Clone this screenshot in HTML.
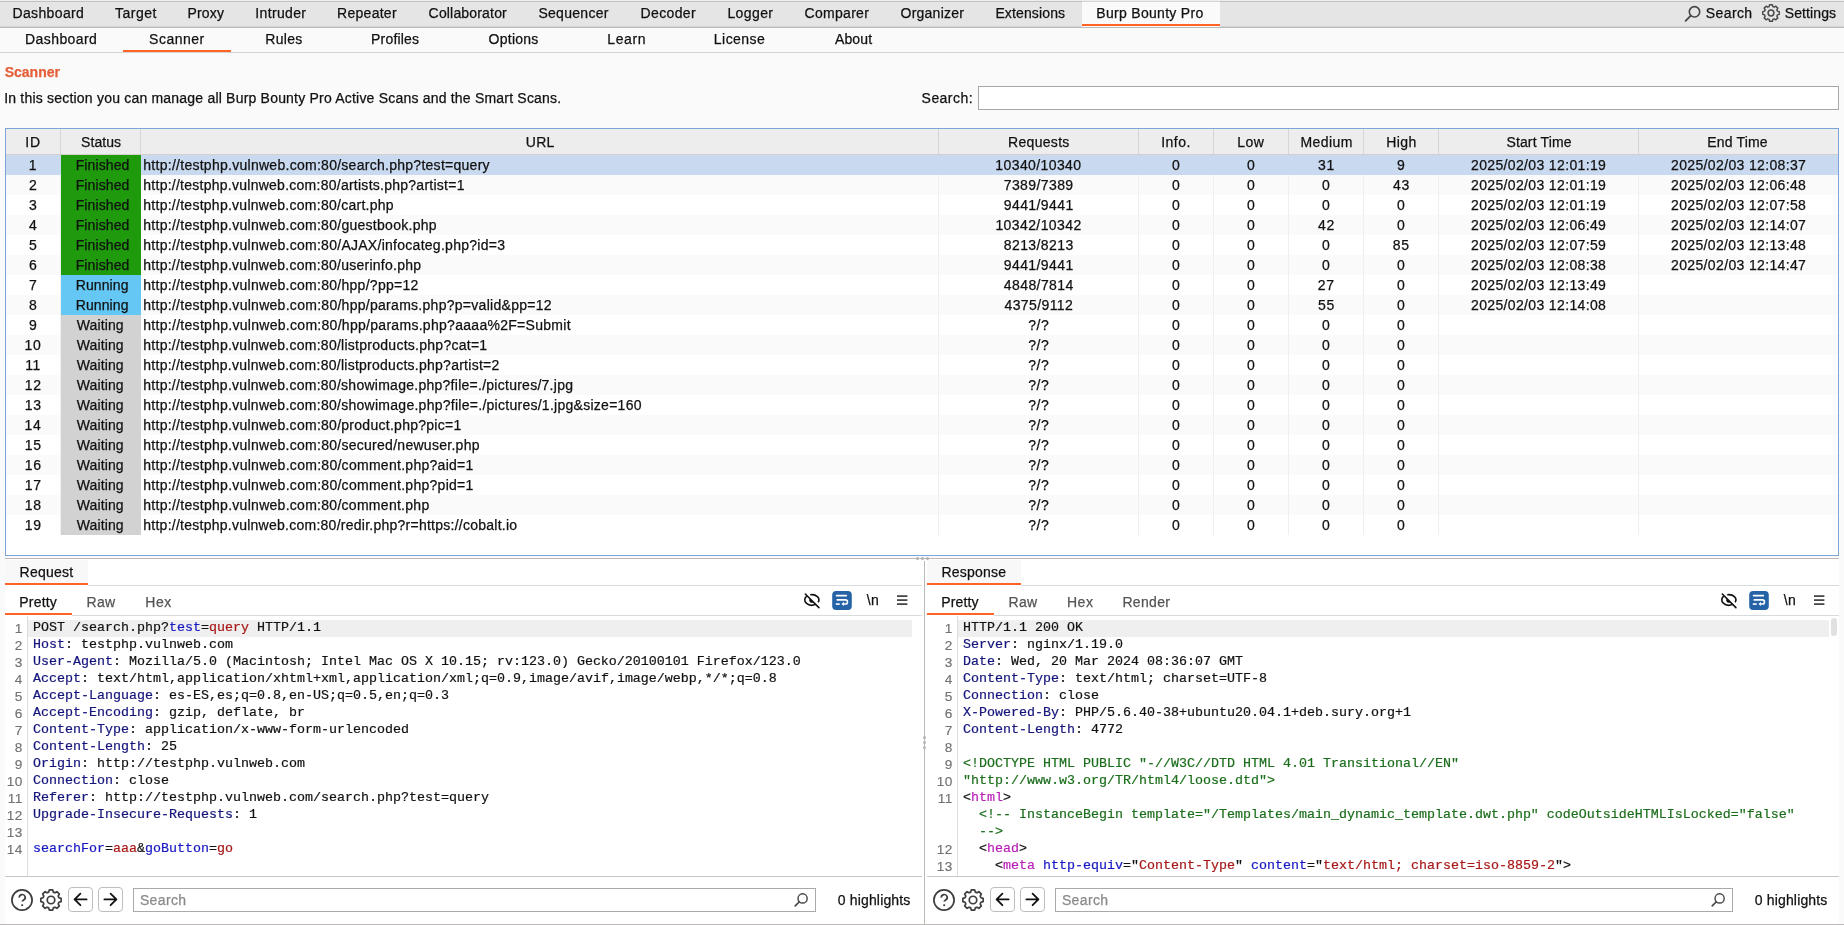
<!DOCTYPE html>
<html><head><meta charset="utf-8"><style>
*{margin:0;padding:0;box-sizing:border-box}
html,body{width:1844px;height:925px;overflow:hidden;background:#fafafa;font-family:"Liberation Sans",sans-serif;font-size:14px;color:#111;position:relative}
.a{position:absolute;white-space:pre}
.t{position:absolute;white-space:pre;line-height:20px;height:20px;-webkit-text-stroke:0.25px currentColor}
.mono{font-family:"Liberation Mono",monospace;font-size:13.333px;-webkit-text-stroke:0.2px currentColor}
</style></head><body><div id="root" style="position:absolute;left:0;top:0;width:1844px;height:925px;background:#fafafa;will-change:transform;overflow:hidden">
<div class="a" style="left:0;top:0;width:1844px;height:1px;background:#ededed"></div>
<div class="a" style="left:0;top:1px;width:1844px;height:27px;background:#e5e5e5;border-top:1px solid #c2c2c2;border-bottom:1px solid #b9b9b9"></div>
<div class="a" style="left:0;top:26px;width:1844px;height:1px;background:#d2d6d6"></div>
<div class="a" style="left:1082px;top:1px;width:138px;height:1px;background:#d6d6d6"></div>
<div class="a" style="left:1082px;top:2px;width:138px;height:25px;background:#fafafa"></div>
<div class="a" style="left:1082px;top:24px;width:138px;height:2px;background:#ff6326"></div>
<div class="t" style="left:12.40px;top:3px;letter-spacing:0.375px;">Dashboard</div>
<div class="t" style="left:115.10px;top:3px;letter-spacing:0.460px;">Target</div>
<div class="t" style="left:187.50px;top:3px;letter-spacing:0.150px;">Proxy</div>
<div class="t" style="left:255.30px;top:3px;letter-spacing:0.343px;">Intruder</div>
<div class="t" style="left:337.10px;top:3px;letter-spacing:0.271px;">Repeater</div>
<div class="t" style="left:428.60px;top:3px;letter-spacing:0.173px;">Collaborator</div>
<div class="t" style="left:538.40px;top:3px;letter-spacing:0.300px;">Sequencer</div>
<div class="t" style="left:640.60px;top:3px;letter-spacing:0.350px;">Decoder</div>
<div class="t" style="left:727.40px;top:3px;letter-spacing:0.400px;">Logger</div>
<div class="t" style="left:804.50px;top:3px;letter-spacing:0.300px;">Comparer</div>
<div class="t" style="left:900.50px;top:3px;letter-spacing:0.250px;">Organizer</div>
<div class="t" style="left:995.40px;top:3px;letter-spacing:0.133px;">Extensions</div>
<div class="t" style="left:1096.30px;top:3px;letter-spacing:0.300px;">Burp Bounty Pro</div>
<svg class="a" style="left:1683px;top:4px" width="20" height="20" viewBox="0 0 20 20"><circle cx="11.5" cy="7.8" r="5.2" fill="none" stroke="#454545" stroke-width="1.6"/><line x1="7.8" y1="11.6" x2="2.6" y2="16.8" stroke="#454545" stroke-width="1.8" stroke-linecap="round"/></svg>
<div class="t" style="left:1705.80px;top:3px;letter-spacing:0.400px;">Search</div>
<svg class="a" style="left:1759.3px;top:1.3px" width="24" height="24" viewBox="0 0 24 24"><path d="M10.63,3.76 L13.37,3.76 L13.86,5.59 L15.22,6.15 L16.85,5.21 L18.79,7.15 L17.85,8.78 L18.41,10.14 L20.24,10.63 L20.24,13.37 L18.41,13.86 L17.85,15.22 L18.79,16.85 L16.85,18.79 L15.22,17.85 L13.86,18.41 L13.37,20.24 L10.63,20.24 L10.14,18.41 L8.78,17.85 L7.15,18.79 L5.21,16.85 L6.15,15.22 L5.59,13.86 L3.76,13.37 L3.76,10.63 L5.59,10.14 L6.15,8.78 L5.21,7.15 L7.15,5.21 L8.78,6.15 L10.14,5.59 Z" fill="none" stroke="#4a4a4a" stroke-width="1.5" stroke-linejoin="round"/><circle cx="12.0" cy="12.0" r="2.91" fill="none" stroke="#4a4a4a" stroke-width="1.5"/></svg>
<div class="t" style="left:1784.70px;top:3px;letter-spacing:0.114px;">Settings</div>
<div class="a" style="left:0;top:52px;width:1844px;height:1px;background:#d3d6d6"></div>
<div class="a" style="left:123px;top:50px;width:108px;height:2px;background:#ff6326"></div>
<div class="t" style="left:25.10px;top:29px;letter-spacing:0.412px;">Dashboard</div>
<div class="t" style="left:149.10px;top:29px;letter-spacing:0.483px;">Scanner</div>
<div class="t" style="left:265.30px;top:29px;letter-spacing:0.300px;">Rules</div>
<div class="t" style="left:371.10px;top:29px;letter-spacing:0.186px;">Profiles</div>
<div class="t" style="left:488.60px;top:29px;letter-spacing:0.250px;">Options</div>
<div class="t" style="left:607.30px;top:29px;letter-spacing:0.600px;">Learn</div>
<div class="t" style="left:713.80px;top:29px;letter-spacing:0.467px;">License</div>
<div class="t" style="left:834.90px;top:29px;letter-spacing:0.150px;">About</div>
<div class="t" style="left:4.80px;top:62px;letter-spacing:-0.033px;font-weight:bold;color:#e5603a">Scanner</div>
<div class="t" style="left:4.20px;top:88px;letter-spacing:0.204px;">In this section you can manage all Burp Bounty Pro Active Scans and the Smart Scans.</div>
<div class="t" style="left:921.60px;top:88px;letter-spacing:0.450px;">Search:</div>
<div class="a" style="left:978px;top:86px;width:861px;height:24px;background:#fff;border:1px solid #aba7a7"></div>
<div class="a" style="left:5px;top:128px;width:1834px;height:428px;background:#fff;border:1px solid #7da5d8"></div>
<div class="a" style="left:6px;top:129px;width:1832px;height:26px;background:#ededed;border-bottom:1px solid #d3d0ce"></div>
<div class="a" style="left:60px;top:129px;width:1px;height:25px;background:#d6d6d6"></div>
<div class="a" style="left:140px;top:129px;width:1px;height:25px;background:#d6d6d6"></div>
<div class="a" style="left:938px;top:129px;width:1px;height:25px;background:#d6d6d6"></div>
<div class="a" style="left:1138px;top:129px;width:1px;height:25px;background:#d6d6d6"></div>
<div class="a" style="left:1213px;top:129px;width:1px;height:25px;background:#d6d6d6"></div>
<div class="a" style="left:1288px;top:129px;width:1px;height:25px;background:#d6d6d6"></div>
<div class="a" style="left:1363px;top:129px;width:1px;height:25px;background:#d6d6d6"></div>
<div class="a" style="left:1438px;top:129px;width:1px;height:25px;background:#d6d6d6"></div>
<div class="a" style="left:1638px;top:129px;width:1px;height:25px;background:#d6d6d6"></div>
<div class="t" style="left:25.30px;top:132px;letter-spacing:0.800px;">ID</div>
<div class="t" style="left:81.00px;top:132px;letter-spacing:0.080px;">Status</div>
<div class="t" style="left:525.70px;top:132px;letter-spacing:0.350px;">URL</div>
<div class="t" style="left:1008.10px;top:132px;letter-spacing:0.300px;">Requests</div>
<div class="t" style="left:1161.20px;top:132px;letter-spacing:0.500px;">Info.</div>
<div class="t" style="left:1237.30px;top:132px;letter-spacing:0.500px;">Low</div>
<div class="t" style="left:1300.40px;top:132px;letter-spacing:0.460px;">Medium</div>
<div class="t" style="left:1386.30px;top:132px;letter-spacing:0.367px;">High</div>
<div class="t" style="left:1506.40px;top:132px;letter-spacing:0.156px;">Start Time</div>
<div class="t" style="left:1707.20px;top:132px;letter-spacing:0.186px;">End Time</div>
<div class="a" style="left:6px;top:155px;width:1832px;height:20px;background:#c9daf0"></div>
<div class="a" style="left:6px;top:175px;width:1832px;height:20px;background:#fafafa"></div>
<div class="a" style="left:6px;top:195px;width:1832px;height:20px;background:#ffffff"></div>
<div class="a" style="left:6px;top:215px;width:1832px;height:20px;background:#fafafa"></div>
<div class="a" style="left:6px;top:235px;width:1832px;height:20px;background:#ffffff"></div>
<div class="a" style="left:6px;top:255px;width:1832px;height:20px;background:#fafafa"></div>
<div class="a" style="left:6px;top:275px;width:1832px;height:20px;background:#ffffff"></div>
<div class="a" style="left:6px;top:295px;width:1832px;height:20px;background:#fafafa"></div>
<div class="a" style="left:6px;top:315px;width:1832px;height:20px;background:#ffffff"></div>
<div class="a" style="left:6px;top:335px;width:1832px;height:20px;background:#fafafa"></div>
<div class="a" style="left:6px;top:355px;width:1832px;height:20px;background:#ffffff"></div>
<div class="a" style="left:6px;top:375px;width:1832px;height:20px;background:#fafafa"></div>
<div class="a" style="left:6px;top:395px;width:1832px;height:20px;background:#ffffff"></div>
<div class="a" style="left:6px;top:415px;width:1832px;height:20px;background:#fafafa"></div>
<div class="a" style="left:6px;top:435px;width:1832px;height:20px;background:#ffffff"></div>
<div class="a" style="left:6px;top:455px;width:1832px;height:20px;background:#fafafa"></div>
<div class="a" style="left:6px;top:475px;width:1832px;height:20px;background:#ffffff"></div>
<div class="a" style="left:6px;top:495px;width:1832px;height:20px;background:#fafafa"></div>
<div class="a" style="left:6px;top:515px;width:1832px;height:20px;background:#ffffff"></div>
<div class="a" style="left:60px;top:175px;width:1px;height:360px;background:#efefef"></div>
<div class="a" style="left:140px;top:175px;width:1px;height:360px;background:#efefef"></div>
<div class="a" style="left:938px;top:175px;width:1px;height:360px;background:#efefef"></div>
<div class="a" style="left:1138px;top:175px;width:1px;height:360px;background:#efefef"></div>
<div class="a" style="left:1213px;top:175px;width:1px;height:360px;background:#efefef"></div>
<div class="a" style="left:1288px;top:175px;width:1px;height:360px;background:#efefef"></div>
<div class="a" style="left:1363px;top:175px;width:1px;height:360px;background:#efefef"></div>
<div class="a" style="left:1438px;top:175px;width:1px;height:360px;background:#efefef"></div>
<div class="a" style="left:1638px;top:175px;width:1px;height:360px;background:#efefef"></div>
<div class="a" style="left:61px;top:155px;width:80px;height:20px;background:#1e9a0c"></div>
<div class="t" style="left:28.75px;top:155px;letter-spacing:0.000px;">1</div>
<div class="t" style="left:75.70px;top:155px;letter-spacing:0.102px;">Finished</div>
<div class="t" style="left:143.30px;top:155px;letter-spacing:0.272px;">http://testphp.vulnweb.com:80/search.php?test=query</div>
<div class="t" style="left:995.34px;top:155px;letter-spacing:0.402px;">10340/10340</div>
<div class="t" style="left:1171.93px;top:155px;letter-spacing:0.000px;">0</div>
<div class="t" style="left:1246.93px;top:155px;letter-spacing:0.000px;">0</div>
<div class="t" style="left:1317.89px;top:155px;letter-spacing:0.725px;">31</div>
<div class="t" style="left:1396.94px;top:155px;letter-spacing:0.000px;">9</div>
<div class="t" style="left:1471.02px;top:155px;letter-spacing:0.353px;">2025/02/03 12:01:19</div>
<div class="t" style="left:1671.07px;top:155px;letter-spacing:0.353px;">2025/02/03 12:08:37</div>
<div class="a" style="left:61px;top:175px;width:80px;height:20px;background:#1e9a0c"></div>
<div class="t" style="left:28.94px;top:175px;letter-spacing:0.000px;">2</div>
<div class="t" style="left:75.70px;top:175px;letter-spacing:0.102px;">Finished</div>
<div class="t" style="left:143.30px;top:175px;letter-spacing:0.257px;">http://testphp.vulnweb.com:80/artists.php?artist=1</div>
<div class="t" style="left:1003.73px;top:175px;letter-spacing:0.406px;">7389/7389</div>
<div class="t" style="left:1171.93px;top:175px;letter-spacing:0.000px;">0</div>
<div class="t" style="left:1246.93px;top:175px;letter-spacing:0.000px;">0</div>
<div class="t" style="left:1321.93px;top:175px;letter-spacing:0.000px;">0</div>
<div class="t" style="left:1392.98px;top:175px;letter-spacing:0.735px;">43</div>
<div class="t" style="left:1471.02px;top:175px;letter-spacing:0.353px;">2025/02/03 12:01:19</div>
<div class="t" style="left:1671.02px;top:175px;letter-spacing:0.353px;">2025/02/03 12:06:48</div>
<div class="a" style="left:61px;top:195px;width:80px;height:20px;background:#1e9a0c"></div>
<div class="t" style="left:28.98px;top:195px;letter-spacing:0.000px;">3</div>
<div class="t" style="left:75.70px;top:195px;letter-spacing:0.102px;">Finished</div>
<div class="t" style="left:143.30px;top:195px;letter-spacing:0.265px;">http://testphp.vulnweb.com:80/cart.php</div>
<div class="t" style="left:1003.77px;top:195px;letter-spacing:0.406px;">9441/9441</div>
<div class="t" style="left:1171.93px;top:195px;letter-spacing:0.000px;">0</div>
<div class="t" style="left:1246.93px;top:195px;letter-spacing:0.000px;">0</div>
<div class="t" style="left:1321.93px;top:195px;letter-spacing:0.000px;">0</div>
<div class="t" style="left:1396.93px;top:195px;letter-spacing:0.000px;">0</div>
<div class="t" style="left:1471.02px;top:195px;letter-spacing:0.353px;">2025/02/03 12:01:19</div>
<div class="t" style="left:1671.02px;top:195px;letter-spacing:0.353px;">2025/02/03 12:07:58</div>
<div class="a" style="left:61px;top:215px;width:80px;height:20px;background:#1e9a0c"></div>
<div class="t" style="left:28.97px;top:215px;letter-spacing:0.000px;">4</div>
<div class="t" style="left:75.70px;top:215px;letter-spacing:0.102px;">Finished</div>
<div class="t" style="left:143.30px;top:215px;letter-spacing:0.274px;">http://testphp.vulnweb.com:80/guestbook.php</div>
<div class="t" style="left:995.45px;top:215px;letter-spacing:0.401px;">10342/10342</div>
<div class="t" style="left:1171.93px;top:215px;letter-spacing:0.000px;">0</div>
<div class="t" style="left:1246.93px;top:215px;letter-spacing:0.000px;">0</div>
<div class="t" style="left:1318.04px;top:215px;letter-spacing:0.730px;">42</div>
<div class="t" style="left:1396.93px;top:215px;letter-spacing:0.000px;">0</div>
<div class="t" style="left:1471.02px;top:215px;letter-spacing:0.353px;">2025/02/03 12:06:49</div>
<div class="t" style="left:1671.07px;top:215px;letter-spacing:0.353px;">2025/02/03 12:14:07</div>
<div class="a" style="left:61px;top:235px;width:80px;height:20px;background:#1e9a0c"></div>
<div class="t" style="left:28.98px;top:235px;letter-spacing:0.000px;">5</div>
<div class="t" style="left:75.70px;top:235px;letter-spacing:0.102px;">Finished</div>
<div class="t" style="left:143.30px;top:235px;letter-spacing:0.273px;">http://testphp.vulnweb.com:80/AJAX/infocateg.php?id=3</div>
<div class="t" style="left:1003.77px;top:235px;letter-spacing:0.406px;">8213/8213</div>
<div class="t" style="left:1171.93px;top:235px;letter-spacing:0.000px;">0</div>
<div class="t" style="left:1246.93px;top:235px;letter-spacing:0.000px;">0</div>
<div class="t" style="left:1321.93px;top:235px;letter-spacing:0.000px;">0</div>
<div class="t" style="left:1392.84px;top:235px;letter-spacing:0.720px;">85</div>
<div class="t" style="left:1471.02px;top:235px;letter-spacing:0.353px;">2025/02/03 12:07:59</div>
<div class="t" style="left:1671.02px;top:235px;letter-spacing:0.353px;">2025/02/03 12:13:48</div>
<div class="a" style="left:61px;top:255px;width:80px;height:20px;background:#1e9a0c"></div>
<div class="t" style="left:28.89px;top:255px;letter-spacing:0.000px;">6</div>
<div class="t" style="left:75.70px;top:255px;letter-spacing:0.102px;">Finished</div>
<div class="t" style="left:143.30px;top:255px;letter-spacing:0.265px;">http://testphp.vulnweb.com:80/userinfo.php</div>
<div class="t" style="left:1003.77px;top:255px;letter-spacing:0.406px;">9441/9441</div>
<div class="t" style="left:1171.93px;top:255px;letter-spacing:0.000px;">0</div>
<div class="t" style="left:1246.93px;top:255px;letter-spacing:0.000px;">0</div>
<div class="t" style="left:1321.93px;top:255px;letter-spacing:0.000px;">0</div>
<div class="t" style="left:1396.93px;top:255px;letter-spacing:0.000px;">0</div>
<div class="t" style="left:1471.02px;top:255px;letter-spacing:0.353px;">2025/02/03 12:08:38</div>
<div class="t" style="left:1671.07px;top:255px;letter-spacing:0.353px;">2025/02/03 12:14:47</div>
<div class="a" style="left:61px;top:275px;width:80px;height:20px;background:#64c7f4"></div>
<div class="t" style="left:28.94px;top:275px;letter-spacing:0.000px;">7</div>
<div class="t" style="left:75.70px;top:275px;letter-spacing:0.117px;">Running</div>
<div class="t" style="left:143.30px;top:275px;letter-spacing:0.276px;">http://testphp.vulnweb.com:80/hpp/?pp=12</div>
<div class="t" style="left:1003.81px;top:275px;letter-spacing:0.409px;">4848/7814</div>
<div class="t" style="left:1171.93px;top:275px;letter-spacing:0.000px;">0</div>
<div class="t" style="left:1246.93px;top:275px;letter-spacing:0.000px;">0</div>
<div class="t" style="left:1317.85px;top:275px;letter-spacing:0.710px;">27</div>
<div class="t" style="left:1396.93px;top:275px;letter-spacing:0.000px;">0</div>
<div class="t" style="left:1471.02px;top:275px;letter-spacing:0.353px;">2025/02/03 12:13:49</div>
<div class="a" style="left:61px;top:295px;width:80px;height:20px;background:#64c7f4"></div>
<div class="t" style="left:28.93px;top:295px;letter-spacing:0.000px;">8</div>
<div class="t" style="left:75.70px;top:295px;letter-spacing:0.117px;">Running</div>
<div class="t" style="left:143.30px;top:295px;letter-spacing:0.281px;">http://testphp.vulnweb.com:80/hpp/params.php?p=valid&amp;pp=12</div>
<div class="t" style="left:1004.50px;top:295px;letter-spacing:0.401px;">4375/9112</div>
<div class="t" style="left:1171.93px;top:295px;letter-spacing:0.000px;">0</div>
<div class="t" style="left:1246.93px;top:295px;letter-spacing:0.000px;">0</div>
<div class="t" style="left:1317.89px;top:295px;letter-spacing:0.725px;">55</div>
<div class="t" style="left:1396.93px;top:295px;letter-spacing:0.000px;">0</div>
<div class="t" style="left:1471.02px;top:295px;letter-spacing:0.353px;">2025/02/03 12:14:08</div>
<div class="a" style="left:61px;top:315px;width:80px;height:20px;background:#d2d2d2"></div>
<div class="t" style="left:28.93px;top:315px;letter-spacing:0.000px;">9</div>
<div class="t" style="left:76.80px;top:315px;letter-spacing:0.106px;">Waiting</div>
<div class="t" style="left:143.30px;top:315px;letter-spacing:0.289px;">http://testphp.vulnweb.com:80/hpp/params.php?aaaa%2F=Submit</div>
<div class="t" style="left:1028.29px;top:315px;letter-spacing:0.463px;">?/?</div>
<div class="t" style="left:1171.93px;top:315px;letter-spacing:0.000px;">0</div>
<div class="t" style="left:1246.93px;top:315px;letter-spacing:0.000px;">0</div>
<div class="t" style="left:1321.93px;top:315px;letter-spacing:0.000px;">0</div>
<div class="t" style="left:1396.93px;top:315px;letter-spacing:0.000px;">0</div>
<div class="a" style="left:61px;top:335px;width:80px;height:20px;background:#d2d2d2"></div>
<div class="t" style="left:24.60px;top:335px;letter-spacing:0.705px;">10</div>
<div class="t" style="left:76.80px;top:335px;letter-spacing:0.106px;">Waiting</div>
<div class="t" style="left:143.30px;top:335px;letter-spacing:0.264px;">http://testphp.vulnweb.com:80/listproducts.php?cat=1</div>
<div class="t" style="left:1028.29px;top:335px;letter-spacing:0.463px;">?/?</div>
<div class="t" style="left:1171.93px;top:335px;letter-spacing:0.000px;">0</div>
<div class="t" style="left:1246.93px;top:335px;letter-spacing:0.000px;">0</div>
<div class="t" style="left:1321.93px;top:335px;letter-spacing:0.000px;">0</div>
<div class="t" style="left:1396.93px;top:335px;letter-spacing:0.000px;">0</div>
<div class="a" style="left:61px;top:355px;width:80px;height:20px;background:#d2d2d2"></div>
<div class="t" style="left:25.23px;top:355px;letter-spacing:0.645px;">11</div>
<div class="t" style="left:76.80px;top:355px;letter-spacing:0.106px;">Waiting</div>
<div class="t" style="left:143.30px;top:355px;letter-spacing:0.258px;">http://testphp.vulnweb.com:80/listproducts.php?artist=2</div>
<div class="t" style="left:1028.29px;top:355px;letter-spacing:0.463px;">?/?</div>
<div class="t" style="left:1171.93px;top:355px;letter-spacing:0.000px;">0</div>
<div class="t" style="left:1246.93px;top:355px;letter-spacing:0.000px;">0</div>
<div class="t" style="left:1321.93px;top:355px;letter-spacing:0.000px;">0</div>
<div class="t" style="left:1396.93px;top:355px;letter-spacing:0.000px;">0</div>
<div class="a" style="left:61px;top:375px;width:80px;height:20px;background:#d2d2d2"></div>
<div class="t" style="left:24.70px;top:375px;letter-spacing:0.695px;">12</div>
<div class="t" style="left:76.80px;top:375px;letter-spacing:0.106px;">Waiting</div>
<div class="t" style="left:143.30px;top:375px;letter-spacing:0.263px;">http://testphp.vulnweb.com:80/showimage.php?file=./pictures/7.jpg</div>
<div class="t" style="left:1028.29px;top:375px;letter-spacing:0.463px;">?/?</div>
<div class="t" style="left:1171.93px;top:375px;letter-spacing:0.000px;">0</div>
<div class="t" style="left:1246.93px;top:375px;letter-spacing:0.000px;">0</div>
<div class="t" style="left:1321.93px;top:375px;letter-spacing:0.000px;">0</div>
<div class="t" style="left:1396.93px;top:375px;letter-spacing:0.000px;">0</div>
<div class="a" style="left:61px;top:395px;width:80px;height:20px;background:#d2d2d2"></div>
<div class="t" style="left:24.65px;top:395px;letter-spacing:0.700px;">13</div>
<div class="t" style="left:76.80px;top:395px;letter-spacing:0.106px;">Waiting</div>
<div class="t" style="left:143.30px;top:395px;letter-spacing:0.268px;">http://testphp.vulnweb.com:80/showimage.php?file=./pictures/1.jpg&amp;size=160</div>
<div class="t" style="left:1028.29px;top:395px;letter-spacing:0.463px;">?/?</div>
<div class="t" style="left:1171.93px;top:395px;letter-spacing:0.000px;">0</div>
<div class="t" style="left:1246.93px;top:395px;letter-spacing:0.000px;">0</div>
<div class="t" style="left:1321.93px;top:395px;letter-spacing:0.000px;">0</div>
<div class="t" style="left:1396.93px;top:395px;letter-spacing:0.000px;">0</div>
<div class="a" style="left:61px;top:415px;width:80px;height:20px;background:#d2d2d2"></div>
<div class="t" style="left:24.55px;top:415px;letter-spacing:0.710px;">14</div>
<div class="t" style="left:76.80px;top:415px;letter-spacing:0.106px;">Waiting</div>
<div class="t" style="left:143.30px;top:415px;letter-spacing:0.271px;">http://testphp.vulnweb.com:80/product.php?pic=1</div>
<div class="t" style="left:1028.29px;top:415px;letter-spacing:0.463px;">?/?</div>
<div class="t" style="left:1171.93px;top:415px;letter-spacing:0.000px;">0</div>
<div class="t" style="left:1246.93px;top:415px;letter-spacing:0.000px;">0</div>
<div class="t" style="left:1321.93px;top:415px;letter-spacing:0.000px;">0</div>
<div class="t" style="left:1396.93px;top:415px;letter-spacing:0.000px;">0</div>
<div class="a" style="left:61px;top:435px;width:80px;height:20px;background:#d2d2d2"></div>
<div class="t" style="left:24.65px;top:435px;letter-spacing:0.700px;">15</div>
<div class="t" style="left:76.80px;top:435px;letter-spacing:0.106px;">Waiting</div>
<div class="t" style="left:143.30px;top:435px;letter-spacing:0.275px;">http://testphp.vulnweb.com:80/secured/newuser.php</div>
<div class="t" style="left:1028.29px;top:435px;letter-spacing:0.463px;">?/?</div>
<div class="t" style="left:1171.93px;top:435px;letter-spacing:0.000px;">0</div>
<div class="t" style="left:1246.93px;top:435px;letter-spacing:0.000px;">0</div>
<div class="t" style="left:1321.93px;top:435px;letter-spacing:0.000px;">0</div>
<div class="t" style="left:1396.93px;top:435px;letter-spacing:0.000px;">0</div>
<div class="a" style="left:61px;top:455px;width:80px;height:20px;background:#d2d2d2"></div>
<div class="t" style="left:24.65px;top:455px;letter-spacing:0.700px;">16</div>
<div class="t" style="left:76.80px;top:455px;letter-spacing:0.106px;">Waiting</div>
<div class="t" style="left:143.30px;top:455px;letter-spacing:0.281px;">http://testphp.vulnweb.com:80/comment.php?aid=1</div>
<div class="t" style="left:1028.29px;top:455px;letter-spacing:0.463px;">?/?</div>
<div class="t" style="left:1171.93px;top:455px;letter-spacing:0.000px;">0</div>
<div class="t" style="left:1246.93px;top:455px;letter-spacing:0.000px;">0</div>
<div class="t" style="left:1321.93px;top:455px;letter-spacing:0.000px;">0</div>
<div class="t" style="left:1396.93px;top:455px;letter-spacing:0.000px;">0</div>
<div class="a" style="left:61px;top:475px;width:80px;height:20px;background:#d2d2d2"></div>
<div class="t" style="left:24.70px;top:475px;letter-spacing:0.695px;">17</div>
<div class="t" style="left:76.80px;top:475px;letter-spacing:0.106px;">Waiting</div>
<div class="t" style="left:143.30px;top:475px;letter-spacing:0.281px;">http://testphp.vulnweb.com:80/comment.php?pid=1</div>
<div class="t" style="left:1028.29px;top:475px;letter-spacing:0.463px;">?/?</div>
<div class="t" style="left:1171.93px;top:475px;letter-spacing:0.000px;">0</div>
<div class="t" style="left:1246.93px;top:475px;letter-spacing:0.000px;">0</div>
<div class="t" style="left:1321.93px;top:475px;letter-spacing:0.000px;">0</div>
<div class="t" style="left:1396.93px;top:475px;letter-spacing:0.000px;">0</div>
<div class="a" style="left:61px;top:495px;width:80px;height:20px;background:#d2d2d2"></div>
<div class="t" style="left:24.65px;top:495px;letter-spacing:0.700px;">18</div>
<div class="t" style="left:76.80px;top:495px;letter-spacing:0.106px;">Waiting</div>
<div class="t" style="left:143.30px;top:495px;letter-spacing:0.280px;">http://testphp.vulnweb.com:80/comment.php</div>
<div class="t" style="left:1028.29px;top:495px;letter-spacing:0.463px;">?/?</div>
<div class="t" style="left:1171.93px;top:495px;letter-spacing:0.000px;">0</div>
<div class="t" style="left:1246.93px;top:495px;letter-spacing:0.000px;">0</div>
<div class="t" style="left:1321.93px;top:495px;letter-spacing:0.000px;">0</div>
<div class="t" style="left:1396.93px;top:495px;letter-spacing:0.000px;">0</div>
<div class="a" style="left:61px;top:515px;width:80px;height:20px;background:#d2d2d2"></div>
<div class="t" style="left:24.65px;top:515px;letter-spacing:0.700px;">19</div>
<div class="t" style="left:76.80px;top:515px;letter-spacing:0.106px;">Waiting</div>
<div class="t" style="left:143.30px;top:515px;letter-spacing:0.253px;">http://testphp.vulnweb.com:80/redir.php?r=https://cobalt.io</div>
<div class="t" style="left:1028.29px;top:515px;letter-spacing:0.463px;">?/?</div>
<div class="t" style="left:1171.93px;top:515px;letter-spacing:0.000px;">0</div>
<div class="t" style="left:1246.93px;top:515px;letter-spacing:0.000px;">0</div>
<div class="t" style="left:1321.93px;top:515px;letter-spacing:0.000px;">0</div>
<div class="t" style="left:1396.93px;top:515px;letter-spacing:0.000px;">0</div>
<div class="a" style="left:5px;top:558px;width:1834px;height:1px;background:#bdb9b9"></div>
<div class="a" style="left:5px;top:559px;width:1834px;height:365px;background:#fff"></div>
<div class="a" style="left:924px;top:561px;width:1px;height:363px;background:#bdb9b9"></div>
<div class="a" style="left:0;top:924px;width:1844px;height:1px;background:#bcb8b8"></div>
<div class="a" style="left:5px;top:560px;width:83px;height:23px;background:#f8f8f8"></div>
<div class="a" style="left:5px;top:583px;width:83px;height:2px;background:#ff6326"></div>
<div class="a" style="left:88px;top:585px;width:834px;height:1px;background:#d6dbdb"></div>
<div class="t" style="left:19.50px;top:562px;letter-spacing:0.267px;">Request</div>
<div class="t" style="left:19.30px;top:592px;letter-spacing:0.200px;color:#111;">Pretty</div>
<div class="t" style="left:86.50px;top:592px;letter-spacing:0.350px;color:#555;">Raw</div>
<div class="t" style="left:145.30px;top:592px;letter-spacing:0.500px;color:#555;">Hex</div>
<div class="a" style="left:5px;top:613px;width:67px;height:2px;background:#ff6326"></div>
<div class="a" style="left:72px;top:615px;width:850px;height:1px;background:#d6dbdb"></div>
<svg class="a" style="left:799px;top:588px" width="26" height="24" viewBox="0 0 26 24"><path d="M11.21,6.78 A7.05,5.25 0 0 1 19.08,14.28" fill="none" stroke="#111" stroke-width="1.6" stroke-linecap="butt"/><path d="M16.64,16.3 A7.05,5.25 0 0 1 7.81,8.19" fill="none" stroke="#111" stroke-width="1.6" stroke-linecap="butt"/><path d="M10.9,10.6 A2.4,2.4 0 0 0 14.3,14.0 Z" fill="#111"/><line x1="6.3" y1="6.0" x2="19.9" y2="19.6" stroke="#111" stroke-width="1.6" stroke-linecap="round"/></svg>
<svg class="a" style="left:832px;top:591px" width="20" height="19" viewBox="0 0 20 19"><rect x="0.2" y="0" width="19.6" height="19" rx="4" fill="#2663a6"/><line x1="4.6" y1="4.55" x2="14.3" y2="4.55" stroke="#fff" stroke-width="1.7" stroke-linecap="round"/><path d="M4.6,8.85 L13.4,8.85 A2.05,2.05 0 0 1 13.4,12.95 L11.0,12.95" fill="none" stroke="#fff" stroke-width="1.6" stroke-linecap="butt"/><path d="M9.5,12.95 L11.9,10.8 L11.9,15.1 Z" fill="#fff"/><rect x="3.8" y="12.2" width="3.9" height="1.75" fill="#fff" fill-opacity="0.92"/></svg>
<div class="t" style="left:866.70px;top:590px;letter-spacing:0.500px;">\n</div>
<svg class="a" style="left:897px;top:594.7px" width="11" height="11" viewBox="0 0 11 11"><rect x="0" y="0.3" width="10.4" height="1.6" fill="#333"/><rect x="0" y="4.3" width="10.4" height="1.6" fill="#333"/><rect x="0" y="8.3" width="10.4" height="1.6" fill="#333"/></svg>
<div class="a" style="left:27px;top:616px;width:1px;height:260px;background:#dedede"></div>
<div class="a" style="left:28px;top:620px;width:884px;height:17px;background:#efefef"></div>
<div class="a" style="left:-7.5px;top:620.3px;width:30px;text-align:right;line-height:17px;font-size:13.6px;letter-spacing:0.3px;color:#727272;-webkit-text-stroke:0.15px currentColor">1</div>
<div class="a mono" style="left:33px;top:619px;line-height:17px">POST /search.php?<span style="color:#1818c2">test</span>=<span style="color:#a81818">query</span> HTTP/1.1</div>
<div class="a" style="left:-7.5px;top:637.3px;width:30px;text-align:right;line-height:17px;font-size:13.6px;letter-spacing:0.3px;color:#727272;-webkit-text-stroke:0.15px currentColor">2</div>
<div class="a mono" style="left:33px;top:636px;line-height:17px"><span style="color:#14147c">Host</span>: testphp.vulnweb.com</div>
<div class="a" style="left:-7.5px;top:654.3px;width:30px;text-align:right;line-height:17px;font-size:13.6px;letter-spacing:0.3px;color:#727272;-webkit-text-stroke:0.15px currentColor">3</div>
<div class="a mono" style="left:33px;top:653px;line-height:17px"><span style="color:#14147c">User-Agent</span>: Mozilla/5.0 (Macintosh; Intel Mac OS X 10.15; rv:123.0) Gecko/20100101 Firefox/123.0</div>
<div class="a" style="left:-7.5px;top:671.3px;width:30px;text-align:right;line-height:17px;font-size:13.6px;letter-spacing:0.3px;color:#727272;-webkit-text-stroke:0.15px currentColor">4</div>
<div class="a mono" style="left:33px;top:670px;line-height:17px"><span style="color:#14147c">Accept</span>: text/html,application/xhtml+xml,application/xml;q=0.9,image/avif,image/webp,*/*;q=0.8</div>
<div class="a" style="left:-7.5px;top:688.3px;width:30px;text-align:right;line-height:17px;font-size:13.6px;letter-spacing:0.3px;color:#727272;-webkit-text-stroke:0.15px currentColor">5</div>
<div class="a mono" style="left:33px;top:687px;line-height:17px"><span style="color:#14147c">Accept-Language</span>: es-ES,es;q=0.8,en-US;q=0.5,en;q=0.3</div>
<div class="a" style="left:-7.5px;top:705.3px;width:30px;text-align:right;line-height:17px;font-size:13.6px;letter-spacing:0.3px;color:#727272;-webkit-text-stroke:0.15px currentColor">6</div>
<div class="a mono" style="left:33px;top:704px;line-height:17px"><span style="color:#14147c">Accept-Encoding</span>: gzip, deflate, br</div>
<div class="a" style="left:-7.5px;top:722.3px;width:30px;text-align:right;line-height:17px;font-size:13.6px;letter-spacing:0.3px;color:#727272;-webkit-text-stroke:0.15px currentColor">7</div>
<div class="a mono" style="left:33px;top:721px;line-height:17px"><span style="color:#14147c">Content-Type</span>: application/x-www-form-urlencoded</div>
<div class="a" style="left:-7.5px;top:739.3px;width:30px;text-align:right;line-height:17px;font-size:13.6px;letter-spacing:0.3px;color:#727272;-webkit-text-stroke:0.15px currentColor">8</div>
<div class="a mono" style="left:33px;top:738px;line-height:17px"><span style="color:#14147c">Content-Length</span>: 25</div>
<div class="a" style="left:-7.5px;top:756.3px;width:30px;text-align:right;line-height:17px;font-size:13.6px;letter-spacing:0.3px;color:#727272;-webkit-text-stroke:0.15px currentColor">9</div>
<div class="a mono" style="left:33px;top:755px;line-height:17px"><span style="color:#14147c">Origin</span>: http://testphp.vulnweb.com</div>
<div class="a" style="left:-7.5px;top:773.3px;width:30px;text-align:right;line-height:17px;font-size:13.6px;letter-spacing:0.3px;color:#727272;-webkit-text-stroke:0.15px currentColor">10</div>
<div class="a mono" style="left:33px;top:772px;line-height:17px"><span style="color:#14147c">Connection</span>: close</div>
<div class="a" style="left:-7.5px;top:790.3px;width:30px;text-align:right;line-height:17px;font-size:13.6px;letter-spacing:0.3px;color:#727272;-webkit-text-stroke:0.15px currentColor">11</div>
<div class="a mono" style="left:33px;top:789px;line-height:17px"><span style="color:#14147c">Referer</span>: http://testphp.vulnweb.com/search.php?test=query</div>
<div class="a" style="left:-7.5px;top:807.3px;width:30px;text-align:right;line-height:17px;font-size:13.6px;letter-spacing:0.3px;color:#727272;-webkit-text-stroke:0.15px currentColor">12</div>
<div class="a mono" style="left:33px;top:806px;line-height:17px"><span style="color:#14147c">Upgrade-Insecure-Requests</span>: 1</div>
<div class="a" style="left:-7.5px;top:824.3px;width:30px;text-align:right;line-height:17px;font-size:13.6px;letter-spacing:0.3px;color:#727272;-webkit-text-stroke:0.15px currentColor">13</div>
<div class="a mono" style="left:33px;top:823px;line-height:17px"></div>
<div class="a" style="left:-7.5px;top:841.3px;width:30px;text-align:right;line-height:17px;font-size:13.6px;letter-spacing:0.3px;color:#727272;-webkit-text-stroke:0.15px currentColor">14</div>
<div class="a mono" style="left:33px;top:840px;line-height:17px"><span style="color:#1818c2">searchFor</span>=<span style="color:#a81818">aaa</span>&amp;<span style="color:#1818c2">goButton</span>=<span style="color:#a81818">go</span></div>
<div class="a" style="left:5px;top:876px;width:917px;height:1px;background:#c9c5c5"></div>
<svg class="a" style="left:9.8px;top:887.8px" width="24" height="24" viewBox="0 0 24 24"><circle cx="12" cy="12" r="10.1" fill="none" stroke="#3d3d3d" stroke-width="1.7"/><path d="M9.3,9.6 A2.95,2.95 0 1 1 13.6,12.1 C12.8,12.6 12.2,12.9 12.2,13.6" fill="none" stroke="#3d3d3d" stroke-width="1.7" stroke-linecap="butt"/><rect x="11.3" y="16.3" width="1.8" height="1.8" fill="#3d3d3d"/></svg>
<svg class="a" style="left:37.2px;top:885.9px" width="28" height="28" viewBox="0 0 28 28"><path d="M12.32,3.89 L15.68,3.89 L16.29,6.13 L17.95,6.81 L19.96,5.66 L22.34,8.04 L21.19,10.05 L21.87,11.71 L24.11,12.32 L24.11,15.68 L21.87,16.29 L21.19,17.95 L22.34,19.96 L19.96,22.34 L17.95,21.19 L16.29,21.87 L15.68,24.11 L12.32,24.11 L11.71,21.87 L10.05,21.19 L8.04,22.34 L5.66,19.96 L6.81,17.95 L6.13,16.29 L3.89,15.68 L3.89,12.32 L6.13,11.71 L6.81,10.05 L5.66,8.04 L8.04,5.66 L10.05,6.81 L11.71,6.13 Z" fill="none" stroke="#3d3d3d" stroke-width="1.7" stroke-linejoin="round"/><circle cx="14.0" cy="14.0" r="3.77" fill="none" stroke="#3d3d3d" stroke-width="1.7"/></svg>
<div class="a" style="left:68px;top:887px;width:25px;height:25px;border:1px solid #c2bcbc;border-radius:4px;background:#fff"></div><svg class="a" style="left:68px;top:887px" width="25" height="25" viewBox="0 0 25 25"><path d="M6.6,12.4 L18.6,12.4 M12.4,6.6 L6.6,12.4 L12.4,18.2" fill="none" stroke="#111" stroke-width="1.8" stroke-linecap="round" stroke-linejoin="round"/></svg>
<div class="a" style="left:98px;top:887px;width:25px;height:25px;border:1px solid #c2bcbc;border-radius:4px;background:#fff"></div><svg class="a" style="left:98px;top:887px" width="25" height="25" viewBox="0 0 25 25"><path d="M6.4,12.4 L18.4,12.4 M12.6,6.6 L18.4,12.4 L12.6,18.2" fill="none" stroke="#111" stroke-width="1.8" stroke-linecap="round" stroke-linejoin="round"/></svg>
<div class="a" style="left:133px;top:888px;width:683px;height:24px;border:1px solid #aca8a8;background:#fff"></div>
<div class="t" style="left:139.90px;top:890px;letter-spacing:0.360px;color:#8a8a8a;">Search</div>
<svg class="a" style="left:793px;top:892px" width="16" height="16" viewBox="0 0 16 16"><circle cx="9.6" cy="6.4" r="4.6" fill="none" stroke="#444" stroke-width="1.4"/><line x1="6.4" y1="9.7" x2="2.2" y2="13.9" stroke="#444" stroke-width="1.6" stroke-linecap="round"/></svg>
<div class="t" style="left:837.80px;top:890px;letter-spacing:0.155px;">0 highlights</div>
<div class="a" style="left:927px;top:560px;width:94px;height:23px;background:#f8f8f8"></div>
<div class="a" style="left:927px;top:583px;width:94px;height:2px;background:#ff6326"></div>
<div class="a" style="left:1021px;top:585px;width:818px;height:1px;background:#d6dbdb"></div>
<div class="t" style="left:941.50px;top:562px;letter-spacing:0.200px;">Response</div>
<div class="t" style="left:941.30px;top:592px;letter-spacing:0.120px;color:#111;">Pretty</div>
<div class="t" style="left:1008.50px;top:592px;letter-spacing:0.300px;color:#555;">Raw</div>
<div class="t" style="left:1066.90px;top:592px;letter-spacing:0.550px;color:#555;">Hex</div>
<div class="t" style="left:1122.40px;top:592px;letter-spacing:0.320px;color:#555;">Render</div>
<div class="a" style="left:927px;top:613px;width:67px;height:2px;background:#ff6326"></div>
<div class="a" style="left:994px;top:615px;width:845px;height:1px;background:#d6dbdb"></div>
<svg class="a" style="left:1716px;top:588px" width="26" height="24" viewBox="0 0 26 24"><path d="M11.21,6.78 A7.05,5.25 0 0 1 19.08,14.28" fill="none" stroke="#111" stroke-width="1.6" stroke-linecap="butt"/><path d="M16.64,16.3 A7.05,5.25 0 0 1 7.81,8.19" fill="none" stroke="#111" stroke-width="1.6" stroke-linecap="butt"/><path d="M10.9,10.6 A2.4,2.4 0 0 0 14.3,14.0 Z" fill="#111"/><line x1="6.3" y1="6.0" x2="19.9" y2="19.6" stroke="#111" stroke-width="1.6" stroke-linecap="round"/></svg>
<svg class="a" style="left:1749px;top:591px" width="20" height="19" viewBox="0 0 20 19"><rect x="0.2" y="0" width="19.6" height="19" rx="4" fill="#2663a6"/><line x1="4.6" y1="4.55" x2="14.3" y2="4.55" stroke="#fff" stroke-width="1.7" stroke-linecap="round"/><path d="M4.6,8.85 L13.4,8.85 A2.05,2.05 0 0 1 13.4,12.95 L11.0,12.95" fill="none" stroke="#fff" stroke-width="1.6" stroke-linecap="butt"/><path d="M9.5,12.95 L11.9,10.8 L11.9,15.1 Z" fill="#fff"/><rect x="3.8" y="12.2" width="3.9" height="1.75" fill="#fff" fill-opacity="0.92"/></svg>
<div class="t" style="left:1783.70px;top:590px;letter-spacing:0.500px;">\n</div>
<svg class="a" style="left:1814px;top:594.7px" width="11" height="11" viewBox="0 0 11 11"><rect x="0" y="0.3" width="10.4" height="1.6" fill="#333"/><rect x="0" y="4.3" width="10.4" height="1.6" fill="#333"/><rect x="0" y="8.3" width="10.4" height="1.6" fill="#333"/></svg>
<div class="a" style="left:957px;top:616px;width:1px;height:260px;background:#dedede"></div>
<div class="a" style="left:958px;top:620px;width:871px;height:17px;background:#efefef"></div>
<div class="a" style="left:1831px;top:618px;width:6px;height:18px;border-radius:3px;background:#e1e1e1"></div>
<div class="a" style="left:922.5px;top:620.3px;width:30px;text-align:right;line-height:17px;font-size:13.6px;letter-spacing:0.3px;color:#727272;-webkit-text-stroke:0.15px currentColor">1</div>
<div class="a mono" style="left:963px;top:619px;line-height:17px">HTTP/1.1 200 OK</div>
<div class="a" style="left:922.5px;top:637.3px;width:30px;text-align:right;line-height:17px;font-size:13.6px;letter-spacing:0.3px;color:#727272;-webkit-text-stroke:0.15px currentColor">2</div>
<div class="a mono" style="left:963px;top:636px;line-height:17px"><span style="color:#14147c">Server</span>: nginx/1.19.0</div>
<div class="a" style="left:922.5px;top:654.3px;width:30px;text-align:right;line-height:17px;font-size:13.6px;letter-spacing:0.3px;color:#727272;-webkit-text-stroke:0.15px currentColor">3</div>
<div class="a mono" style="left:963px;top:653px;line-height:17px"><span style="color:#14147c">Date</span>: Wed, 20 Mar 2024 08:36:07 GMT</div>
<div class="a" style="left:922.5px;top:671.3px;width:30px;text-align:right;line-height:17px;font-size:13.6px;letter-spacing:0.3px;color:#727272;-webkit-text-stroke:0.15px currentColor">4</div>
<div class="a mono" style="left:963px;top:670px;line-height:17px"><span style="color:#14147c">Content-Type</span>: text/html; charset=UTF-8</div>
<div class="a" style="left:922.5px;top:688.3px;width:30px;text-align:right;line-height:17px;font-size:13.6px;letter-spacing:0.3px;color:#727272;-webkit-text-stroke:0.15px currentColor">5</div>
<div class="a mono" style="left:963px;top:687px;line-height:17px"><span style="color:#14147c">Connection</span>: close</div>
<div class="a" style="left:922.5px;top:705.3px;width:30px;text-align:right;line-height:17px;font-size:13.6px;letter-spacing:0.3px;color:#727272;-webkit-text-stroke:0.15px currentColor">6</div>
<div class="a mono" style="left:963px;top:704px;line-height:17px"><span style="color:#14147c">X-Powered-By</span>: PHP/5.6.40-38+ubuntu20.04.1+deb.sury.org+1</div>
<div class="a" style="left:922.5px;top:722.3px;width:30px;text-align:right;line-height:17px;font-size:13.6px;letter-spacing:0.3px;color:#727272;-webkit-text-stroke:0.15px currentColor">7</div>
<div class="a mono" style="left:963px;top:721px;line-height:17px"><span style="color:#14147c">Content-Length</span>: 4772</div>
<div class="a" style="left:922.5px;top:739.3px;width:30px;text-align:right;line-height:17px;font-size:13.6px;letter-spacing:0.3px;color:#727272;-webkit-text-stroke:0.15px currentColor">8</div>
<div class="a mono" style="left:963px;top:738px;line-height:17px"></div>
<div class="a" style="left:922.5px;top:756.3px;width:30px;text-align:right;line-height:17px;font-size:13.6px;letter-spacing:0.3px;color:#727272;-webkit-text-stroke:0.15px currentColor">9</div>
<div class="a mono" style="left:963px;top:755px;line-height:17px"><span style="color:#1b6e1b">&lt;!DOCTYPE HTML PUBLIC "-//W3C//DTD HTML 4.01 Transitional//EN"</span></div>
<div class="a" style="left:922.5px;top:773.3px;width:30px;text-align:right;line-height:17px;font-size:13.6px;letter-spacing:0.3px;color:#727272;-webkit-text-stroke:0.15px currentColor">10</div>
<div class="a mono" style="left:963px;top:772px;line-height:17px"><span style="color:#1b6e1b">"http://www.w3.org/TR/html4/loose.dtd"&gt;</span></div>
<div class="a" style="left:922.5px;top:790.3px;width:30px;text-align:right;line-height:17px;font-size:13.6px;letter-spacing:0.3px;color:#727272;-webkit-text-stroke:0.15px currentColor">11</div>
<div class="a mono" style="left:963px;top:789px;line-height:17px">&lt;<span style="color:#b820b8">html</span>&gt;</div>
<div class="a mono" style="left:963px;top:806px;line-height:17px">  <span style="color:#1b6e1b">&lt;!-- InstanceBegin template="/Templates/main_dynamic_template.dwt.php" codeOutsideHTMLIsLocked="false"</span></div>
<div class="a mono" style="left:963px;top:823px;line-height:17px">  <span style="color:#1b6e1b">--&gt;</span></div>
<div class="a" style="left:922.5px;top:841.3px;width:30px;text-align:right;line-height:17px;font-size:13.6px;letter-spacing:0.3px;color:#727272;-webkit-text-stroke:0.15px currentColor">12</div>
<div class="a mono" style="left:963px;top:840px;line-height:17px">  &lt;<span style="color:#b820b8">head</span>&gt;</div>
<div class="a" style="left:922.5px;top:858.3px;width:30px;text-align:right;line-height:17px;font-size:13.6px;letter-spacing:0.3px;color:#727272;-webkit-text-stroke:0.15px currentColor">13</div>
<div class="a mono" style="left:963px;top:857px;line-height:17px">    &lt;<span style="color:#b820b8">meta</span> <span style="color:#1818c2">http-equiv</span>="<span style="color:#a81818">Content-Type</span>" <span style="color:#1818c2">content</span>="<span style="color:#a81818">text/html; charset=iso-8859-2</span>"&gt;</div>
<div class="a" style="left:927px;top:876px;width:912px;height:1px;background:#c9c5c5"></div>
<svg class="a" style="left:931.8px;top:887.8px" width="24" height="24" viewBox="0 0 24 24"><circle cx="12" cy="12" r="10.1" fill="none" stroke="#3d3d3d" stroke-width="1.7"/><path d="M9.3,9.6 A2.95,2.95 0 1 1 13.6,12.1 C12.8,12.6 12.2,12.9 12.2,13.6" fill="none" stroke="#3d3d3d" stroke-width="1.7" stroke-linecap="butt"/><rect x="11.3" y="16.3" width="1.8" height="1.8" fill="#3d3d3d"/></svg>
<svg class="a" style="left:959.2px;top:885.9px" width="28" height="28" viewBox="0 0 28 28"><path d="M12.32,3.89 L15.68,3.89 L16.29,6.13 L17.95,6.81 L19.96,5.66 L22.34,8.04 L21.19,10.05 L21.87,11.71 L24.11,12.32 L24.11,15.68 L21.87,16.29 L21.19,17.95 L22.34,19.96 L19.96,22.34 L17.95,21.19 L16.29,21.87 L15.68,24.11 L12.32,24.11 L11.71,21.87 L10.05,21.19 L8.04,22.34 L5.66,19.96 L6.81,17.95 L6.13,16.29 L3.89,15.68 L3.89,12.32 L6.13,11.71 L6.81,10.05 L5.66,8.04 L8.04,5.66 L10.05,6.81 L11.71,6.13 Z" fill="none" stroke="#3d3d3d" stroke-width="1.7" stroke-linejoin="round"/><circle cx="14.0" cy="14.0" r="3.77" fill="none" stroke="#3d3d3d" stroke-width="1.7"/></svg>
<div class="a" style="left:990px;top:887px;width:25px;height:25px;border:1px solid #c2bcbc;border-radius:4px;background:#fff"></div><svg class="a" style="left:990px;top:887px" width="25" height="25" viewBox="0 0 25 25"><path d="M6.6,12.4 L18.6,12.4 M12.4,6.6 L6.6,12.4 L12.4,18.2" fill="none" stroke="#111" stroke-width="1.8" stroke-linecap="round" stroke-linejoin="round"/></svg>
<div class="a" style="left:1020px;top:887px;width:25px;height:25px;border:1px solid #c2bcbc;border-radius:4px;background:#fff"></div><svg class="a" style="left:1020px;top:887px" width="25" height="25" viewBox="0 0 25 25"><path d="M6.4,12.4 L18.4,12.4 M12.6,6.6 L18.4,12.4 L12.6,18.2" fill="none" stroke="#111" stroke-width="1.8" stroke-linecap="round" stroke-linejoin="round"/></svg>
<div class="a" style="left:1055px;top:888px;width:678px;height:24px;border:1px solid #aca8a8;background:#fff"></div>
<div class="t" style="left:1061.90px;top:890px;letter-spacing:0.360px;color:#8a8a8a;">Search</div>
<svg class="a" style="left:1710px;top:892px" width="16" height="16" viewBox="0 0 16 16"><circle cx="9.6" cy="6.4" r="4.6" fill="none" stroke="#444" stroke-width="1.4"/><line x1="6.4" y1="9.7" x2="2.2" y2="13.9" stroke="#444" stroke-width="1.6" stroke-linecap="round"/></svg>
<div class="t" style="left:1754.80px;top:890px;letter-spacing:0.155px;">0 highlights</div>
<div class="a" style="left:922.9px;top:735.9px;width:3.2px;height:3.2px;border-radius:50%;background:#b4b4b4"></div>
<div class="a" style="left:922.9px;top:740.8px;width:3.2px;height:3.2px;border-radius:50%;background:#b4b4b4"></div>
<div class="a" style="left:922.9px;top:745.6999999999999px;width:3.2px;height:3.2px;border-radius:50%;background:#b4b4b4"></div>
<div class="a" style="left:915.9px;top:556.9px;width:3.2px;height:3.2px;border-radius:50%;background:#b0b0b0"></div>
<div class="a" style="left:920.9px;top:556.9px;width:3.2px;height:3.2px;border-radius:50%;background:#b0b0b0"></div>
<div class="a" style="left:925.9px;top:556.9px;width:3.2px;height:3.2px;border-radius:50%;background:#b0b0b0"></div>
</div></body></html>
